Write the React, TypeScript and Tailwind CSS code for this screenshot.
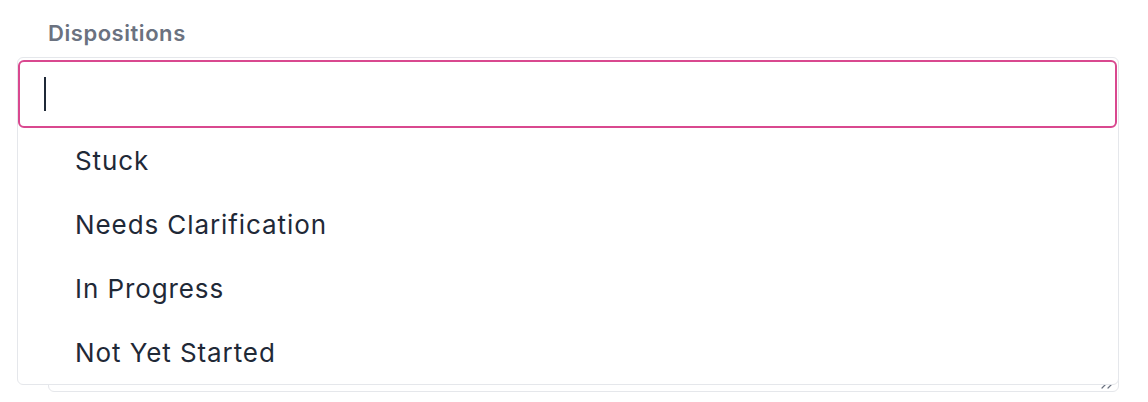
const options = ['Stuck', 'Needs Clarification', 'In Progress', 'Not Yet Started'];

export default function App() {
  return (
    <div className="relative min-h-[402px] bg-white pt-[19px] pl-12 pr-[29px] font-['Inter',sans-serif]">
      <label className="block h-7 text-[22px] leading-7 font-semibold tracking-[0.025em] text-[#6b7280]">Dispositions</label>
      <div className="relative mt-[11px] h-[334px] rounded-md border border-[#e5e7eb] bg-white">
        <svg className="absolute right-[3px] bottom-[2px]" width="14" height="8" viewBox="0 0 14 8">
          <path d="M1 7 L6 2 M7 7 L12 2" stroke="#6b7280" strokeWidth="1.2" strokeLinecap="round" />
        </svg>
      </div>

      {/* open dropdown over the field */}
      <div className="absolute left-[17px] top-[57px] w-[1102px] h-[328px] rounded-md border border-[#e5e7eb] bg-white">
        <div className="mt-[2px] flex h-[68px] w-[1099px] items-center rounded-md border-2 border-[#d9488f] pl-[24px]">
          <span className="h-[34px] w-[2px] bg-[#1f2937]" />
        </div>
        <ul>
          {options.map((opt) => (
            <li key={opt} className="flex h-16 items-center pl-[57px] text-[26px] tracking-[0.035em] text-[#1f2937]">
              {opt}
            </li>
          ))}
        </ul>
      </div>
    </div>
  );
}
